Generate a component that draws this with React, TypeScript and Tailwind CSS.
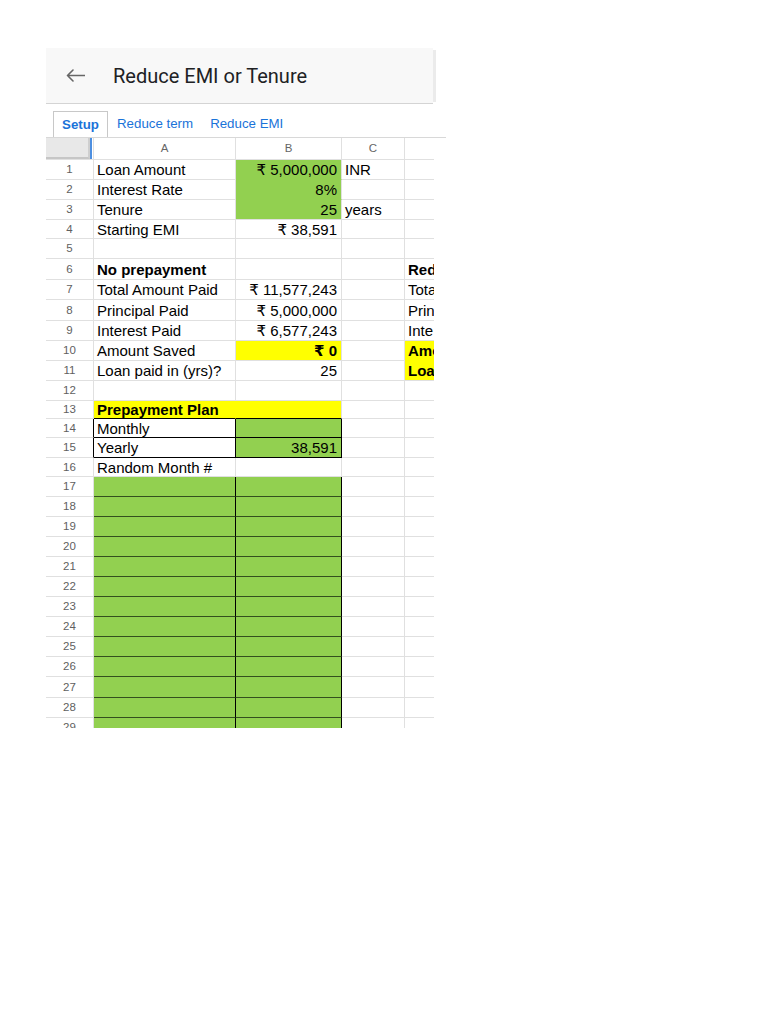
import React from "react";

const BR_GRAY = "border-r-[#e0e0e0]";
const BB_GRAY = "border-b-[#e0e0e0]";
const BR_BLACK = "border-r-black";
const BB_BLACK = "border-b-black";
const BB_GREEN = "border-b-[#92d050]";
const BR_YEL = "border-r-[#ffff00]";
const BB_YEL = "border-b-[#ffff00]";
const BB_DARK = "border-b-[#34501e]";
const GREEN = "bg-[#92d050]";
const YEL = "bg-[#ffff00]";

type C = {
  t?: string;
  b?: boolean;
  r?: boolean;
  bg?: string;
  br?: string;
  bb?: string;
};

type Row = {
  n: number;
  h: string;
  numBr?: string;
  a?: C;
  bcell?: C;
  c?: C;
  d?: C;
};

const greenA: C = { bg: GREEN, br: BR_BLACK, bb: BB_DARK };
const greenB: C = { bg: GREEN, br: BR_BLACK, bb: BB_DARK };

const rows: Row[] = [
  { n: 1, h: "h-[20px]", a: { t: "Loan Amount" }, bcell: { t: "₹ 5,000,000", r: true, bg: GREEN, bb: BB_GREEN }, c: { t: "INR" } },
  { n: 2, h: "h-[20px]", a: { t: "Interest Rate" }, bcell: { t: "8%", r: true, bg: GREEN, bb: BB_GREEN } },
  { n: 3, h: "h-[20px]", a: { t: "Tenure" }, bcell: { t: "25", r: true, bg: GREEN }, c: { t: "years" } },
  { n: 4, h: "h-[19px]", a: { t: "Starting EMI" }, bcell: { t: "₹ 38,591", r: true } },
  { n: 5, h: "h-[20px]" },
  { n: 6, h: "h-[20.5px]", a: { t: "No prepayment", b: true }, d: { t: "Red", b: true } },
  { n: 7, h: "h-[20.5px]", a: { t: "Total Amount Paid" }, bcell: { t: "₹ 11,577,243", r: true }, d: { t: "Tota" } },
  { n: 8, h: "h-[20.5px]", a: { t: "Principal Paid" }, bcell: { t: "₹ 5,000,000", r: true }, d: { t: "Prin" } },
  { n: 9, h: "h-[20.5px]", a: { t: "Interest Paid" }, bcell: { t: "₹ 6,577,243", r: true }, d: { t: "Inte" } },
  { n: 10, h: "h-[20px]", a: { t: "Amount Saved" }, bcell: { t: "₹ 0", r: true, b: true, bg: YEL }, d: { t: "Amount", b: true, bg: YEL, bb: BB_YEL } },
  { n: 11, h: "h-[20px]", a: { t: "Loan paid in (yrs)?" }, bcell: { t: "25", r: true }, d: { t: "Loan", b: true, bg: YEL } },
  { n: 12, h: "h-[20px]" },
  { n: 13, h: "h-[18px]", a: { t: "Prepayment Plan", b: true, bg: YEL, br: BR_YEL, bb: BB_BLACK }, bcell: { bg: YEL, bb: BB_BLACK } },
  { n: 14, h: "h-[19px]", numBr: BR_BLACK, a: { t: "Monthly", br: BR_BLACK, bb: BB_BLACK }, bcell: { bg: GREEN, br: BR_BLACK, bb: BB_BLACK } },
  { n: 15, h: "h-[20px]", numBr: BR_BLACK, a: { t: "Yearly", br: BR_BLACK, bb: BB_BLACK }, bcell: { t: "38,591", r: true, bg: GREEN, br: BR_BLACK, bb: BB_BLACK } },
  { n: 16, h: "h-[19px]", a: { t: "Random Month #" } },
  ...[17, 18, 19, 20, 21, 22, 23, 24, 25, 26].map((n) => ({ n, h: "h-[20px]", a: greenA, bcell: greenB })),
  { n: 27, h: "h-[21px]", a: greenA, bcell: greenB },
  { n: 28, h: "h-[20px]", a: greenA, bcell: greenB },
  { n: 29, h: "h-[20px]", a: greenA, bcell: greenB },
];

function Cell({ w, c, noR }: { w: string; c?: C; noR?: boolean }) {
  const cc = c || {};
  const cls = [
    w,
    "shrink-0 h-full border-b flex items-center pt-[2px] overflow-hidden whitespace-nowrap",
    cc.bb || BB_GRAY,
    noR ? "" : "border-r",
    noR ? "" : cc.br || BR_GRAY,
    cc.bg || "bg-white",
    cc.r ? "justify-end pr-[4px]" : "pl-[3px]",
    cc.b ? "font-bold" : "",
  ].join(" ");
  return <div className={cls}>{cc.t}</div>;
}

export default function App() {
  return (
    <div className="w-[768px] h-[1024px] bg-white overflow-hidden">
      <div className="pl-[46px] pt-[46px]">
        <div className="w-[400px] h-[682px] overflow-hidden bg-white">
          {/* App bar */}
          <div className="flex items-start pt-[2px] h-[58px]">
            <div className="w-[387px] h-[56px] bg-[#f8f8f8] border-b border-b-[#d4d4d4] flex items-center">
              <svg className="ml-[20px]" width="19" height="13" viewBox="0 0 19 13" fill="none">
                <path d="M18.5 6.5H1.5M7 1L1.5 6.5L7 12" stroke="#666666" strokeWidth="1.6" strokeLinecap="round" strokeLinejoin="round" />
              </svg>
              <div className="ml-[28px] text-[20px] text-[#202124] font-['Roboto',sans-serif] leading-none">
                Reduce EMI or Tenure
              </div>
            </div>
            <div className="mt-[2px] w-[3px] h-[52px] bg-[#ebebeb]" />
          </div>

          {/* Tabs */}
          <div className="h-[34px] border-b border-b-[#d8d8d8] flex items-end pl-[7px] font-['Liberation_Sans',Arial,sans-serif] text-[13.3px] text-[#1a73d9]">
            <div className="w-[55px] h-[26px] border-t border-l border-r border-[#c8c8c8] flex items-center justify-center font-bold bg-white">
              Setup
            </div>
            <div className="h-[26px] flex items-center ml-[9px]">Reduce term</div>
            <div className="h-[26px] flex items-center ml-[17px]">Reduce EMI</div>
          </div>

          {/* Column header */}
          <div className="flex h-[22px] font-['Liberation_Sans',Arial,sans-serif] text-[11.5px] text-[#666666]">
            <div className="w-[48px] shrink-0 h-full flex border-b border-b-[#e0e0e0]">
              <div className="w-[44px] h-full bg-[#e8e8e8] border-b-2 border-b-[#c6c6c6] border-r-2 border-r-[#cfcfcf]" />
              <div className="w-[2px] h-full bg-[#4d8fe0]" />
              <div className="w-[2px] h-full bg-white border-r border-r-[#e0e0e0]" />
            </div>
            <div className="w-[142px] shrink-0 h-full border-r border-b border-[#e0e0e0] flex items-center justify-center">A</div>
            <div className="w-[106px] shrink-0 h-full border-r border-b border-[#e0e0e0] flex items-center justify-center">B</div>
            <div className="w-[63px] shrink-0 h-full border-r border-b border-[#e0e0e0] flex items-center justify-center">C</div>
            <div className="w-[29px] shrink-0 h-full border-b border-[#e0e0e0]" />
          </div>

          {/* Rows */}
          <div className="font-['Liberation_Sans',Arial,'DejaVu_Sans',sans-serif] text-[15px] text-black">
            {rows.map((r) => (
              <div key={r.n} className={`flex ${r.h}`}>
                <div
                  className={`w-[48px] shrink-0 h-full border-b border-r ${BB_GRAY} ${r.numBr || BR_GRAY} flex items-center justify-center pt-[1px] text-[11.5px] text-[#5f5f5f]`}
                >
                  {r.n}
                </div>
                <Cell w="w-[142px]" c={r.a} />
                <Cell w="w-[106px]" c={r.bcell} />
                <Cell w="w-[63px]" c={r.c} />
                <Cell w="w-[29px]" c={r.d} noR />
              </div>
            ))}
          </div>
        </div>
      </div>
    </div>
  );
}
